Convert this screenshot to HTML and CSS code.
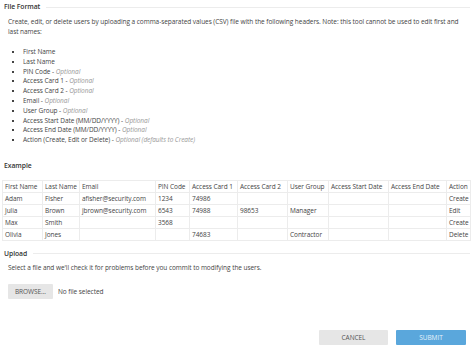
FILE: index.html
```html
<!DOCTYPE html>
<html lang="en">
<head>
    <meta charset="UTF-8">
    <meta name="viewport" content="width=device-width, initial-scale=1.0">
    <title>Bulk user import</title>
    <link rel="stylesheet" href="styles.css">
</head>
<body>
    <div class="page">
        <h2 class="section-title"><span>File Format</span></h2>
        <p class="intro">Create, edit, or delete users by uploading a comma-separated values (CSV) file with the following headers. Note: this tool cannot be used to edit first and last names:</p>
        <ul class="fields">
            <li>First Name</li>
            <li>Last Name</li>
            <li>PIN Code - <em>Optional</em></li>
            <li>Access Card 1 - <em>Optional</em></li>
            <li>Access Card 2 - <em>Optional</em></li>
            <li>Email - <em>Optional</em></li>
            <li>User Group - <em>Optional</em></li>
            <li>Access Start Date (MM/DD/YYYY) - <em>Optional</em></li>
            <li>Access End Date (MM/DD/YYYY) - <em>Optional</em></li>
            <li>Action (Create, Edit or Delete) - <em>Optional (defaults to Create)</em></li>
        </ul>

        <h3 class="example-title">Example</h3>
        <table class="example">
            <tr>
                <td class="c-first">First Name</td>
                <td class="c-last">Last Name</td>
                <td class="c-email">Email</td>
                <td class="c-pin">PIN Code</td>
                <td class="c-card1">Access Card 1</td>
                <td class="c-card2">Access Card 2</td>
                <td class="c-group">User Group</td>
                <td class="c-start">Access Start Date</td>
                <td class="c-end">Access End Date</td>
                <td class="c-action">Action</td>
            </tr>
            <tr>
                <td>Adam</td><td>Fisher</td><td>afisher@security.com</td><td>1234</td><td>74986</td>
                <td></td><td></td><td></td><td></td><td>Create</td>
            </tr>
            <tr>
                <td>Julia</td><td>Brown</td><td>jbrown@security.com</td><td>6543</td><td>74988</td>
                <td>98653</td><td>Manager</td><td></td><td></td><td>Edit</td>
            </tr>
            <tr>
                <td>Max</td><td>Smith</td><td></td><td>3568</td><td></td>
                <td></td><td></td><td></td><td></td><td>Create</td>
            </tr>
            <tr>
                <td>Olivia</td><td>Jones</td><td></td><td></td><td>74683</td>
                <td></td><td>Contractor</td><td></td><td></td><td>Delete</td>
            </tr>
        </table>

        <h2 class="section-title upload-title"><span>Upload</span></h2>
        <p class="upload-note">Select a file and we'll check it for problems before you commit to modifying the users.</p>
        <div class="file-row">
            <button class="btn btn-browse">BROWSE...</button>
            <span class="file-name">No file selected</span>
        </div>

        <div class="actions">
            <button class="btn btn-cancel">CANCEL</button>
            <button class="btn btn-submit">SUBMIT</button>
        </div>
    </div>
</body>
</html>
```

FILE: styles.css
```css
body {
    margin: 0;
    background: #fff;
    color: #444;
    font-family: 'Open Sans', 'Noto Sans', sans-serif;
    font-size: 6.5px;
    letter-spacing: -0.06px;
}

.page {
    padding: 2px 4px 0 4px;
}

.section-title {
    display: flex;
    align-items: center;
    gap: 6px;
    margin: 0;
    font-size: 6.8px;
    font-weight: 600;
    color: #333;
    line-height: 10px;
}

.section-title::after {
    content: "";
    flex: 1;
    height: 1px;
    background: #ececec;
}

.intro {
    margin: 5px 0 0 4px;
    line-height: 10px;
}

.fields {
    margin: 10px 0 0 0;
    padding-left: 19px;
    line-height: 9.8px;
    list-style: square;
}

.fields em {
    color: #999;
}

.example-title {
    margin: 16px 0 0 0;
    font-size: 6.8px;
    font-weight: 600;
    color: #333;
    line-height: 10px;
}

.example {
    margin: 9px 0 0 -2px;
    width: 469px;
    table-layout: fixed;
    border-collapse: collapse;
}

.example td {
    box-sizing: border-box;
    border: 1px solid #ececec;
    height: 12px;
    padding: 0 2px;
    line-height: 11px;
    white-space: nowrap;
    overflow: hidden;
}

.c-first { width: 40px; }
.c-last { width: 37px; }
.c-email { width: 76px; }
.c-pin { width: 34px; }
.c-card1 { width: 48px; }
.c-card2 { width: 50px; }
.c-group { width: 41px; }
.c-start { width: 60px; }
.c-end { width: 58px; }

.upload-title {
    margin-top: 8px;
}

.upload-note {
    margin: 4px 0 0 4px;
    line-height: 10px;
}

.file-row {
    display: flex;
    align-items: center;
    gap: 5px;
    margin: 11px 0 0 4px;
}

.btn {
    border: none;
    font-family: 'Open Sans', 'Noto Sans', sans-serif;
    font-size: 6.5px;
    letter-spacing: -0.06px;
    padding: 0;
    border-radius: 1px;
}

.btn-browse {
    width: 45px;
    height: 15px;
    background: #e6e6e6;
    color: #555;
}

.actions {
    display: flex;
    justify-content: flex-end;
    gap: 8px;
    margin-top: 31px;
    padding-right: 4px;
}

.btn-cancel {
    width: 69px;
    height: 15px;
    background: #e6e6e6;
    color: #555;
}

.btn-submit {
    width: 70px;
    height: 15px;
    background: #5aa7dc;
    color: #e6f1fa;
}
```
